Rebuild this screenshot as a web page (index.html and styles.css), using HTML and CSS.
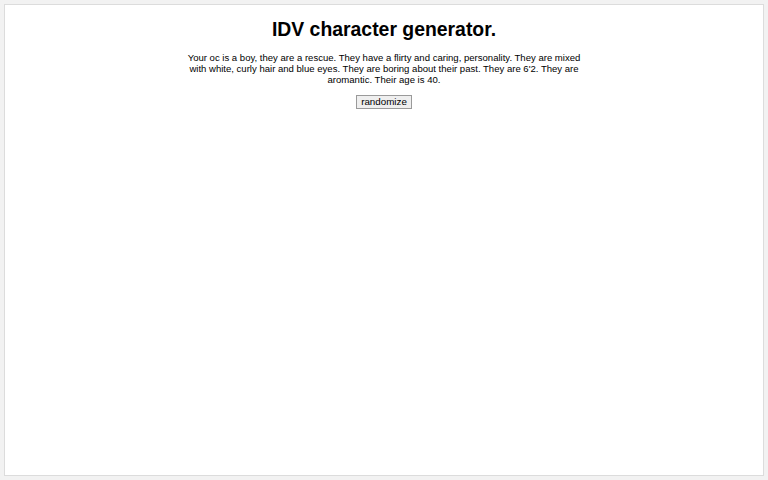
FILE: index.html
```html
<!DOCTYPE html>
<html>
<head>
<meta charset="utf-8">
<title>IDV character generator.</title>
<link rel="stylesheet" href="styles.css">
</head>
<body>
<div class="frame">
  <h1 class="title">IDV character generator.</h1>
  <p class="result">Your oc is a boy, they are a rescue. They have a flirty and caring, personality. They are mixed with white, curly hair and blue eyes. They are boring about their past. They are 6'2. They are aromantic. Their age is 40.</p>
  <div class="actions">
    <button class="btn" type="button">randomize</button>
  </div>
</div>
</body>
</html>
```
FILE: styles.css
```css
html, body {
  margin: 0;
  padding: 0;
}
body {
  background: #f2f2f2;
  padding: 4px;
  font-family: "Liberation Sans", Arial, sans-serif;
  color: #000;
}
.frame {
  box-sizing: border-box;
  width: 760px;
  height: 472px;
  background: #fff;
  border: 1px solid #dcdcdc;
  text-align: center;
  padding-top: 12px;
}
.title {
  margin: 0;
  font-size: 19.4px;
  font-weight: bold;
  line-height: 24px;
}
.result {
  width: 400px;
  margin: 11px auto 0;
  font-size: 9.55px;
  line-height: 11px;
}
.actions {
  margin-top: 6px;
}
.btn {
  font-family: "Liberation Sans", Arial, sans-serif;
  font-size: 9.8px;
  line-height: 10px;
  padding: 1px 4px;
  background: #efefef;
  border: 1px solid #9a9a9a;
  border-radius: 0;
  color: #000;
}
```
